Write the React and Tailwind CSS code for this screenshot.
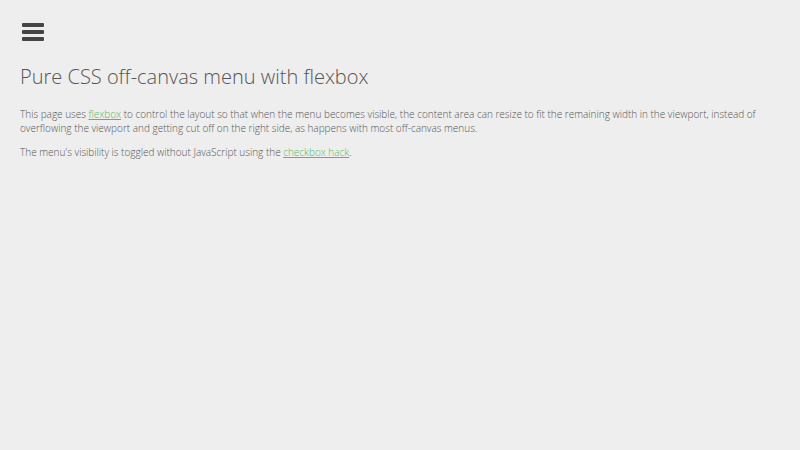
import React from 'react';

// hamburger toggle icon
const MenuIcon = () => (
  <div className="ml-[2px] flex flex-col gap-[3.5px] w-[22px]">
    <span className="block h-[3.5px] w-full rounded-[1px] bg-[#444]" />
    <span className="block h-[3.5px] w-full rounded-[1px] bg-[#444]" />
    <span className="block h-[3.5px] w-full rounded-[1px] bg-[#444]" />
  </div>
);

export default function App() {
  return (
    <div
      className="min-h-screen w-full bg-[#eeeeee] text-[#555]"
      style={{ fontFamily: '"Open Sans", "Liberation Sans", sans-serif' }}
    >
      <div className="px-5 pt-[23px]">
        <MenuIcon />
        <h1 className="mt-[22px] text-[20px] leading-[28px] font-light text-[#555]">
          Pure CSS off-canvas menu with flexbox
        </h1>
        <p className="mt-[16px] text-[10px] leading-[14px] font-light">
          This page uses <a href="#" className="text-[#5cb85c] underline">flexbox</a> to control the layout so that when the menu becomes visible, the content area can resize to fit the remaining width in the viewport, instead of overflowing the viewport and getting cut off on the right side, as happens with most off-canvas menus.
        </p>
        <p className="mt-[10px] text-[10px] leading-[14px] font-light">
          The menu's visibility is toggled without JavaScript using the <a href="#" className="text-[#5cb85c] underline">checkbox hack</a>.
        </p>
      </div>
    </div>
  );
}
